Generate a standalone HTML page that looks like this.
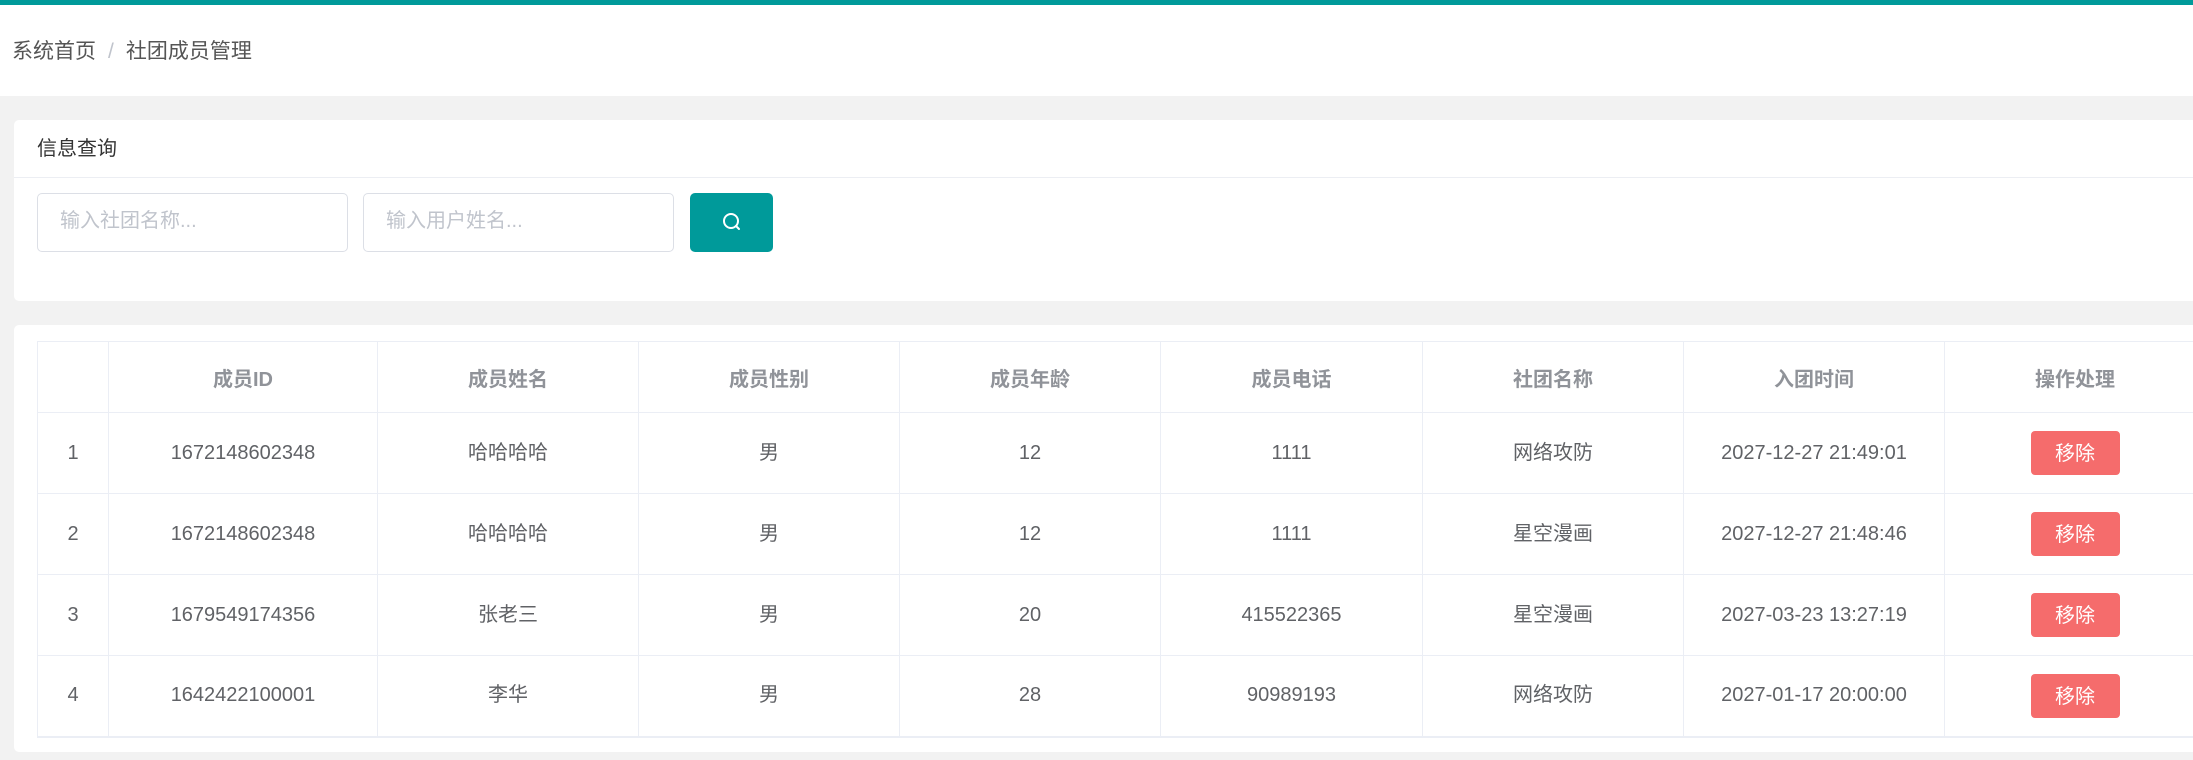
<!DOCTYPE html>
<html><head><meta charset="utf-8"><style>
*{margin:0;padding:0;box-sizing:border-box}
body{width:2193px;height:760px;overflow:hidden;background:#f2f2f2;font-family:"Liberation Sans","Noto Sans CJK SC",sans-serif;position:relative}
.top{position:absolute;left:0;top:0;width:2193px;height:96px;background:#fff;border-top:5px solid #009a9a}
.bc{position:absolute;left:12px;top:35px;font-size:21px;color:#555;line-height:24px}
.bc .s{color:#c0c4cc;margin:0 12px}
.card{position:absolute;left:14px;width:2200px;background:#fff;border-radius:5px}
.title{position:absolute;left:23px;top:12px;font-size:20px;color:#333}
.div{position:absolute;left:0;right:0;top:57px;height:1px;background:#eceef3}
.inp{position:absolute;top:73px;height:59px;width:311px;border:1px solid #dcdfe6;border-radius:5px;font-size:20px;color:#c0c4cc;padding-left:22px;line-height:55px}
.btn{position:absolute;left:676px;top:73px;width:83px;height:59px;background:#009a9a;border-radius:5px}
table{position:absolute;left:23px;top:16px;border-collapse:collapse;table-layout:fixed}
td,th{border:1px solid #ebeef5;text-align:center;font-size:20px;color:#606266;font-weight:normal}
th{height:71px;color:#909399;font-weight:bold}
td{height:81px}
.c{position:relative;top:-3px}
tr:last-child td{border-bottom:2px solid #ebeef5}
.rm{display:inline-block;width:89px;height:44px;line-height:46px;background:#f56c6c;color:#fff;border-radius:4px;font-size:20px}
</style></head><body>
<div class="top"><div class="bc">系统首页<span class="s">/</span>社团成员管理</div></div>
<div class="card" style="top:120px;height:181px">
<div class="title">信息查询</div><div class="div"></div>
<div class="inp" style="left:23px">输入社团名称...</div>
<div class="inp" style="left:349px">输入用户姓名...</div>
<div class="btn"><svg width="83" height="59" viewBox="0 0 83 59"><circle cx="41" cy="28" r="7" fill="none" stroke="#fff" stroke-width="2"/><path d="M46 33l3 3" stroke="#fff" stroke-width="2" stroke-linecap="round"/></svg></div>
</div>
<div class="card" style="top:325px;height:427px">
<table>
<colgroup><col style="width:71px"><col style="width:269px"><col style="width:261px"><col style="width:261px"><col style="width:261px"><col style="width:262px"><col style="width:261px"><col style="width:261px"><col style="width:261px"></colgroup>
<tr><th></th><th>成员ID</th><th>成员姓名</th><th>成员性别</th><th>成员年龄</th><th>成员电话</th><th>社团名称</th><th>入团时间</th><th>操作处理</th></tr>
<tr><td>1</td><td>1672148602348</td><td><span class="c">哈哈哈哈</span></td><td><span class="c">男</span></td><td>12</td><td>1111</td><td><span class="c">网络攻防</span></td><td>2027-12-27 21:49:01</td><td><span class="rm">移除</span></td></tr>
<tr><td>2</td><td>1672148602348</td><td><span class="c">哈哈哈哈</span></td><td><span class="c">男</span></td><td>12</td><td>1111</td><td><span class="c">星空漫画</span></td><td>2027-12-27 21:48:46</td><td><span class="rm">移除</span></td></tr>
<tr><td>3</td><td>1679549174356</td><td><span class="c">张老三</span></td><td><span class="c">男</span></td><td>20</td><td>415522365</td><td><span class="c">星空漫画</span></td><td>2027-03-23 13:27:19</td><td><span class="rm">移除</span></td></tr>
<tr><td>4</td><td>1642422100001</td><td><span class="c">李华</span></td><td><span class="c">男</span></td><td>28</td><td>90989193</td><td><span class="c">网络攻防</span></td><td>2027-01-17 20:00:00</td><td><span class="rm">移除</span></td></tr>
</table>
</div>
</body></html>
